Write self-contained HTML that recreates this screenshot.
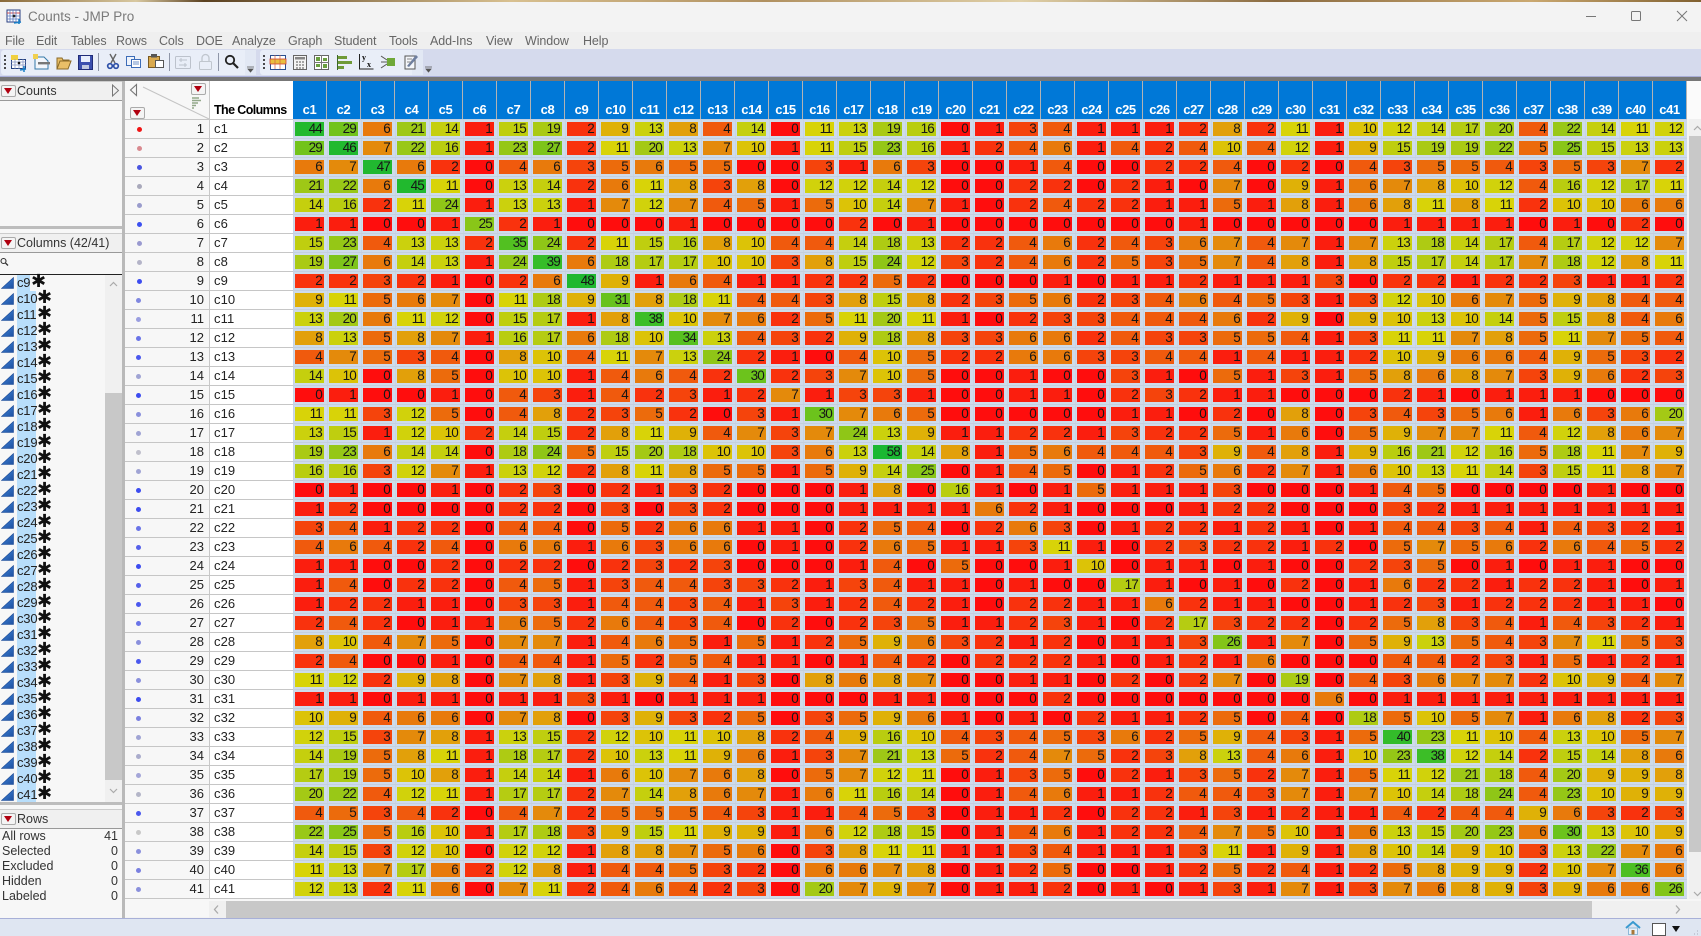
<!DOCTYPE html>
<html><head><meta charset="utf-8"><title>Counts - JMP Pro</title>
<style>
html,body{margin:0;padding:0;width:1701px;height:936px;overflow:hidden;background:#f3f3f3;font-family:"Liberation Sans",sans-serif;font-size:12.5px;color:#222}
.p{position:absolute}
#strip{left:0;top:0;width:1701px;height:2px;background:linear-gradient(90deg,#8a6a3a,#d8c8a0 8%,#5a4020 12%,#d8c090 30%,#b09060 45%,#e0d0a8 60%,#8a6a40 75%,#caa870 90%,#806030)}
#title{left:28px;top:8px;font-size:13.5px;color:#7a7a7a;line-height:17px}
#menu{left:0;top:32px;width:1701px;height:17px;background:#efefef}
#menu span{position:absolute;top:1px;line-height:17px;color:#666;font-size:12.5px;letter-spacing:-.1px}
#tb{left:0;top:49px;width:1701px;height:27px;background:#d5daed}
#tl{left:0;top:76px;width:1701px;height:1px;background:#a9aed8}
#tg{left:0;top:77px;width:1701px;height:4px;background:#777}
#lp{left:0;top:81px;width:122px;height:837px;background:#f7f7f7}
#ls{left:122px;top:81px;width:3px;height:837px;background:#b9b9b9}
.hd{position:absolute;left:0;width:122px;height:18px;background:#f0f0f0;border-top:1px solid #ccc;border-bottom:1px solid #999;line-height:18px;text-indent:17px;color:#333;font-size:12.5px}
.rb{position:absolute;width:13px;height:10px;border:1px solid #aaa;border-radius:2px;background:#f4f4f4}
.rb:after{content:"";position:absolute;left:2px;top:2px;border-left:4.5px solid transparent;border-right:4.5px solid transparent;border-top:6px solid #b00010}
.gb{position:absolute;left:0;width:122px;height:3px;background:#bdbdbd}
#ll{left:0;top:275px;width:105px}
.l{position:relative;height:16px;line-height:16px;font-size:13px;color:#222}
.l b{position:absolute;left:17px;top:0;width:19px;height:16px;background:#b8defb;font-weight:normal;letter-spacing:-.2px;white-space:nowrap}
.l em{position:absolute;left:37px;top:-2px;font:bold 18px/18px "DejaVu Sans",sans-serif;color:#111}
.l svg{position:absolute;left:1px;top:2px}
.sr{position:absolute;left:2px;width:116px;line-height:15px;height:15px;font-size:12.5px;color:#333}
.sr i{position:absolute;right:0;font-style:normal}
#rc{left:125px;top:81px;width:168px;height:836px;background:#f7f7f7}
#nc{left:210px;top:81px;width:83px;height:817px;background:#fff}
#rv{left:209px;top:81px;width:1px;height:817px;background:#c8c8c8}
#rl{left:125px;top:119px;width:168px}
.h{position:relative;height:18px;border-top:1px solid #c6c6c6;line-height:18px;font-size:13px;color:#222}
.h s{position:absolute;top:7px;left:12px;width:5px;height:5px;border-radius:50%}
.h em{position:absolute;right:89px;top:0;font-style:normal}
.h u{position:absolute;left:89px;top:0;text-decoration:none;letter-spacing:.1px}
#the{left:214px;top:102px;font:bold 12.5px/16px "Liberation Sans",sans-serif;letter-spacing:-.6px;color:#000;white-space:nowrap}
#hc{left:293px;top:81px;width:1394px;height:38px;display:flex;background:#0078d7}
#hc div{width:34px;box-sizing:border-box;border-right:1px solid #b3b3b3;text-align:center;color:#fff;font:bold 13px/16px "Liberation Sans",sans-serif;letter-spacing:-.4px;padding-top:21px}
#hm{left:293px;top:119px;width:1394px;height:780px;background-color:#cedbea;background-image:linear-gradient(#c4d0e0 1px,transparent 1px),linear-gradient(90deg,#c8d4e3 1px,transparent 1px);background-size:34px 19px}
.r{display:flex;height:19px;box-sizing:border-box;padding:3px 0 0 2px}
.r i{display:block;flex:none;width:29px;height:14px;margin-right:5px;box-sizing:border-box;padding-right:2px;text-align:right;font:13.5px/14px "Liberation Sans",sans-serif;letter-spacing:-.8px;color:#161616}
.a0{background:#ff0d0d}.a1{background:#fb1e0e}.a2{background:#f9320d}.a3{background:#f5440c}.a4{background:#f05a0d}.a5{background:#ec6b0c}.a6{background:#e87a0c}.a7{background:#e48a0b}.a8{background:#e2a00a}.a9{background:#dfb107}.a10{background:#dcc307}.a11{background:#d8d308}.a12{background:#d1d20b}.a13{background:#cbd10d}.a14{background:#c5cf0e}.a15{background:#bfce0f}.a16{background:#b9cd10}.a17{background:#b5cc12}.a18{background:#aecb13}.a19{background:#aaca14}.a20{background:#a4c915}.a21{background:#9ec816}.a22{background:#99c817}.a23{background:#95c716}.a24{background:#8fc617}.a25{background:#89c618}.a26{background:#83c519}.a27{background:#7dc41a}.a29{background:#72c31b}.a30{background:#6cc31c}.a31{background:#67c21e}.a34{background:#57c020}.a35{background:#52c021}.a36{background:#4cbf23}.a38{background:#3cbe27}.a39{background:#36bd29}.a40{background:#33bc2a}.a44{background:#23b92d}.a45{background:#21b92e}.a46{background:#21b92f}.a47{background:#21b830}.a48{background:#1fb830}.a58{background:#1ab832}
#st{left:0;top:918px;width:1701px;height:18px;background:#dfe6f2;border-top:1px solid #a8b0d8;box-sizing:border-box}
</style></head><body>
<div class="p" id="strip"></div>
<svg class="p" style="left:6px;top:9px" width="16" height="16" viewBox="0 0 16 16"><rect x="1" y="1" width="13" height="12" fill="#fff" stroke="#2a3f80"/><path d="M1 4h13" stroke="#d85050" stroke-width="1"/><path d="M1 7h13M1 10h13M4 1v12M7 1v12M10 1v12" stroke="#5a7ac0" stroke-width=".8"/><circle cx="8" cy="7" r="1.4" fill="#222"/><path d="M8 14l7-1M13 10v5" stroke="#1a80c8" stroke-width="1.6"/></svg>
<div class="p" id="title">Counts - JMP Pro</div>
<svg class="p" style="left:1580px;top:8px" width="115" height="18" viewBox="0 0 115 18"><path d="M6 8.5h10" stroke="#777" stroke-width="1"/><rect x="51.5" y="3.5" width="9" height="9" rx="1" fill="none" stroke="#777"/><path d="M97 3l10 10M107 3L97 13" stroke="#777" stroke-width="1"/></svg>
<div class="p" id="menu"><span style="left:5px">File</span><span style="left:36px">Edit</span><span style="left:71px">Tables</span><span style="left:116px">Rows</span><span style="left:159px">Cols</span><span style="left:196px">DOE</span><span style="left:232px">Analyze</span><span style="left:288px">Graph</span><span style="left:334px">Student</span><span style="left:389px">Tools</span><span style="left:430px">Add-Ins</span><span style="left:486px">View</span><span style="left:525px">Window</span><span style="left:583px">Help</span></div>
<div class="p" id="tb"></div>
<svg class="p" style="left:0;top:49px" width="440" height="28" viewBox="0 49 440 28">
<rect x="1" y="50" width="255" height="25" rx="3" fill="#e9eef8"/><rect x="260" y="50" width="163" height="25" rx="3" fill="#e9eef8"/>
<rect x="245" y="50" width="11" height="25" fill="#e2e8f4"/><rect x="412" y="50" width="11" height="25" fill="#e2e8f4"/>
<path d="M5 55v2M5 59v2M5 63v2M5 67v2M264 55v2M264 59v2M264 63v2M264 67v2" stroke="#222" stroke-width="1.6"/>
<rect x="11.5" y="59.5" width="14" height="9" fill="#fff" stroke="#23407f"/><rect x="11" y="55" width="7" height="5" fill="#f0d040"/><path d="M11 62h15M11 65h15M15 59v10M19 59v10M23 59v10" stroke="#8090c0" stroke-width=".7"/><circle cx="19" cy="63" r="1.3" fill="#111"/><path d="M20 70l6-1M24 66v6" stroke="#1a80c8" stroke-width="1.5"/>
<path d="M35 57h9l4 4v8H35z" fill="#f3f6fb" stroke="#3478a8"/><rect x="33" y="54" width="5" height="5" fill="#f0d050"/><rect x="38" y="62" width="12" height="2.4" fill="#777"/>
<path d="M57 69l3-8h11l-3 8zM57 69v-11h5l1 2h6v1" fill="#e9bf68" stroke="#8a6a28"/>
<rect x="78.5" y="55.5" width="14" height="14" fill="#3b4fae" stroke="#202c78"/><rect x="81" y="56" width="9" height="6" fill="#e8eefc"/><rect x="82" y="65" width="7" height="4" fill="#c0c8e0"/>
<path d="M98.5 53v18M169.5 53v18M218.5 53v18" stroke="#8f96a8"/>
<path d="M110 54l5 9M116 54l-5 9" stroke="#666" stroke-width="1.4"/><circle cx="110" cy="66" r="2.3" fill="none" stroke="#2d50a8" stroke-width="1.7"/><circle cx="116" cy="66" r="2.3" fill="none" stroke="#2d50a8" stroke-width="1.7"/>
<rect x="126.5" y="56.5" width="8" height="9" fill="#eef3fb" stroke="#3c6cb8"/><rect x="131.5" y="59.5" width="9" height="8" fill="#fff" stroke="#3c6cb8"/><path d="M133 62h6M133 64h6" stroke="#3c6cb8" stroke-width=".7"/>
<rect x="148.5" y="56.5" width="11" height="11" fill="#d9a94e" stroke="#7a5a20"/><rect x="151" y="54" width="6" height="3.5" fill="#555"/><rect x="155.5" y="60.5" width="8" height="7" fill="#fff" stroke="#555"/>
<rect x="175.5" y="56.5" width="15" height="12" rx="1" fill="none" stroke="#bcc2cc"/><path d="M179 60h8M179 65h8M181 58v4M185 63v4" stroke="#bcc2cc"/>
<rect x="199.5" y="61.5" width="12" height="8" rx="1" fill="none" stroke="#c0c6ce"/><path d="M202 61v-3a3.5 3.5 0 017 0v3" fill="none" stroke="#c0c6ce" stroke-width="1.3"/>
<circle cx="230" cy="60" r="4.2" fill="none" stroke="#222" stroke-width="1.8"/><path d="M233 63l5 5" stroke="#222" stroke-width="2.2"/>
<path d="M247 67h7M248 69h5l-2.5 3z" stroke="#555" stroke-width=".8" fill="#555"/><path d="M425 67h7M426 69h5l-2.5 3z" stroke="#555" stroke-width=".8" fill="#555"/>
<rect x="270.5" y="55.5" width="15" height="14" fill="#fff" stroke="#2a4f90"/><rect x="270" y="59" width="16" height="5" fill="#e8c040" stroke="#d04030" stroke-width=".8"/><path d="M275 55v14M280 55v14" stroke="#d06040" stroke-width=".7"/>
<rect x="293.5" y="55.5" width="13" height="14" fill="#f4f4f4" stroke="#666"/><rect x="295" y="57" width="10" height="2.5" fill="#888"/><path d="M296 62h2M299 62h2M302 62h2M296 65h2M299 65h2M302 65h2M296 68h2M299 68h2M302 68h2" stroke="#555"/>
<rect x="314.5" y="55.5" width="14" height="14" fill="#fff" stroke="#666"/><path d="M321.5 55v14M314 62.5h15" stroke="#777"/><rect x="316" y="57" width="4" height="4" fill="#6aa040"/><rect x="323" y="58" width="4" height="3" fill="#6aa040"/><rect x="316" y="64" width="4" height="3" fill="#6aa040"/><rect x="323" y="64" width="4" height="4" fill="#6aa040"/>
<path d="M337.5 55v15" stroke="#3c6828"/><rect x="338" y="56" width="9" height="3" fill="#6f9a38"/><rect x="338" y="61" width="14" height="3" fill="#6f9a38"/><rect x="338" y="66" width="6" height="3" fill="#6f9a38"/>
<path d="M359.5 54v15h14" fill="none" stroke="#222"/><text x="362" y="60" font-family="Liberation Serif" font-size="8" font-weight="bold" fill="#111">y</text><text x="367" y="67" font-family="Liberation Serif" font-size="8" font-weight="bold" fill="#111">x</text>
<path d="M381 56l6 4M381 62h6M381 68l6-4" stroke="#555"/><rect x="387" y="58" width="8" height="8" fill="#6fa838"/>
<path d="M405 56h10v13h-10z" fill="#f4f6fa" stroke="#555"/><path d="M407 66l9-11 2 2-9 10z" fill="#6f7f9f"/><path d="M407 59h5M407 62h4" stroke="#888"/>
</svg>
<div class="p" id="tl"></div><div class="p" id="tg"></div>

<div class="p" id="lp"></div><div class="p" id="ls"></div>
<div class="hd" style="top:81px">Counts</div><div class="rb" style="left:1px;top:85px"></div>
<svg class="p" style="left:111px;top:83px" width="9" height="15" viewBox="0 0 9 15"><path d="M1.5 2l6 5.5-6 5.5z" fill="none" stroke="#777"/></svg>
<div class="gb" style="top:226px"></div>
<div class="hd" style="top:233px">Columns (42/41)</div><div class="rb" style="left:1px;top:237px"></div>
<svg class="p" style="left:0;top:256px" width="10" height="12" viewBox="0 0 10 12"><circle cx="3.5" cy="5" r="2.5" fill="none" stroke="#333" stroke-width="1.1"/><path d="M5.5 7l2.5 2.5" stroke="#333" stroke-width="1.3"/></svg>
<div class="p" style="left:0;top:274px;width:122px;height:1px;background:#222"></div>
<div class="p" style="left:105px;top:275px;width:17px;height:527px;background:#f0f0f0"></div>
<div class="p" style="left:105px;top:393px;width:17px;height:387px;background:#c8c8c8"></div>
<svg class="p" style="left:105px;top:275px" width="17" height="527" viewBox="0 0 17 527"><path d="M5 11l3.5-3.5L12 11M5 514l3.5 3.5L12 514" fill="none" stroke="#aaa" stroke-width="1.2"/></svg>
<svg width="0" height="0" style="position:absolute"><defs><linearGradient id="g" x1="0" y1="0" x2="1" y2="1"><stop offset="0" stop-color="#3f8ae0"/><stop offset="1" stop-color="#1f4f9f"/></linearGradient><symbol id="t" viewBox="0 0 13 12"><path d="M.5 11.5L12.5.5v11z" fill="url(#g)" stroke="#1d4a96" stroke-width=".6"/></symbol></defs></svg>
<div class="p" id="ll">
<div class="l"><svg width="13" height="12"><use href="#t"/></svg><b style="width:13px">c9</b><em style="left:31px">✱</em></div>
<div class="l"><svg width="13" height="12"><use href="#t"/></svg><b>c10</b><em>✱</em></div>
<div class="l"><svg width="13" height="12"><use href="#t"/></svg><b>c11</b><em>✱</em></div>
<div class="l"><svg width="13" height="12"><use href="#t"/></svg><b>c12</b><em>✱</em></div>
<div class="l"><svg width="13" height="12"><use href="#t"/></svg><b>c13</b><em>✱</em></div>
<div class="l"><svg width="13" height="12"><use href="#t"/></svg><b>c14</b><em>✱</em></div>
<div class="l"><svg width="13" height="12"><use href="#t"/></svg><b>c15</b><em>✱</em></div>
<div class="l"><svg width="13" height="12"><use href="#t"/></svg><b>c16</b><em>✱</em></div>
<div class="l"><svg width="13" height="12"><use href="#t"/></svg><b>c17</b><em>✱</em></div>
<div class="l"><svg width="13" height="12"><use href="#t"/></svg><b>c18</b><em>✱</em></div>
<div class="l"><svg width="13" height="12"><use href="#t"/></svg><b>c19</b><em>✱</em></div>
<div class="l"><svg width="13" height="12"><use href="#t"/></svg><b>c20</b><em>✱</em></div>
<div class="l"><svg width="13" height="12"><use href="#t"/></svg><b>c21</b><em>✱</em></div>
<div class="l"><svg width="13" height="12"><use href="#t"/></svg><b>c22</b><em>✱</em></div>
<div class="l"><svg width="13" height="12"><use href="#t"/></svg><b>c23</b><em>✱</em></div>
<div class="l"><svg width="13" height="12"><use href="#t"/></svg><b>c24</b><em>✱</em></div>
<div class="l"><svg width="13" height="12"><use href="#t"/></svg><b>c25</b><em>✱</em></div>
<div class="l"><svg width="13" height="12"><use href="#t"/></svg><b>c26</b><em>✱</em></div>
<div class="l"><svg width="13" height="12"><use href="#t"/></svg><b>c27</b><em>✱</em></div>
<div class="l"><svg width="13" height="12"><use href="#t"/></svg><b>c28</b><em>✱</em></div>
<div class="l"><svg width="13" height="12"><use href="#t"/></svg><b>c29</b><em>✱</em></div>
<div class="l"><svg width="13" height="12"><use href="#t"/></svg><b>c30</b><em>✱</em></div>
<div class="l"><svg width="13" height="12"><use href="#t"/></svg><b>c31</b><em>✱</em></div>
<div class="l"><svg width="13" height="12"><use href="#t"/></svg><b>c32</b><em>✱</em></div>
<div class="l"><svg width="13" height="12"><use href="#t"/></svg><b>c33</b><em>✱</em></div>
<div class="l"><svg width="13" height="12"><use href="#t"/></svg><b>c34</b><em>✱</em></div>
<div class="l"><svg width="13" height="12"><use href="#t"/></svg><b>c35</b><em>✱</em></div>
<div class="l"><svg width="13" height="12"><use href="#t"/></svg><b>c36</b><em>✱</em></div>
<div class="l"><svg width="13" height="12"><use href="#t"/></svg><b>c37</b><em>✱</em></div>
<div class="l"><svg width="13" height="12"><use href="#t"/></svg><b>c38</b><em>✱</em></div>
<div class="l"><svg width="13" height="12"><use href="#t"/></svg><b>c39</b><em>✱</em></div>
<div class="l"><svg width="13" height="12"><use href="#t"/></svg><b>c40</b><em>✱</em></div>
<div class="l"><svg width="13" height="12"><use href="#t"/></svg><b>c41</b><em>✱</em></div>
</div>
<div class="gb" style="top:802px"></div>
<div class="hd" style="top:809px">Rows</div><div class="rb" style="left:1px;top:813px"></div>
<div class="sr" style="top:829px">All rows<i>41</i></div>
<div class="sr" style="top:844px">Selected<i>0</i></div>
<div class="sr" style="top:859px">Excluded<i>0</i></div>
<div class="sr" style="top:874px">Hidden<i>0</i></div>
<div class="sr" style="top:889px">Labeled<i>0</i></div>

<div class="p" id="rc"></div><div class="p" id="nc"></div><div class="p" id="rv"></div>
<svg class="p" style="left:125px;top:81px" width="85" height="38" viewBox="125 81 85 38"><path d="M143 87l66 32" stroke="#c4c4c4"/><path d="M136.5 84.5l-6 5.5 6 5.5z" fill="none" stroke="#777" stroke-width="1.1"/><path d="M192 98h7M192 100.500h9M192 103h6M192 105.500h4M192 108h2" stroke="#93a88a" stroke-width="1.6"/></svg>
<div class="rb" style="left:191px;top:83px"></div><div class="rb" style="left:130px;top:107px"></div>
<div class="p" id="the">The Columns</div>
<div class="p" id="hc"><div>c1</div><div>c2</div><div>c3</div><div>c4</div><div>c5</div><div>c6</div><div>c7</div><div>c8</div><div>c9</div><div>c10</div><div>c11</div><div>c12</div><div>c13</div><div>c14</div><div>c15</div><div>c16</div><div>c17</div><div>c18</div><div>c19</div><div>c20</div><div>c21</div><div>c22</div><div>c23</div><div>c24</div><div>c25</div><div>c26</div><div>c27</div><div>c28</div><div>c29</div><div>c30</div><div>c31</div><div>c32</div><div>c33</div><div>c34</div><div>c35</div><div>c36</div><div>c37</div><div>c38</div><div>c39</div><div>c40</div><div>c41</div></div>
<div class="p" id="rl">
<div class="h"><s style="background:#f01414;left:12px"></s><em>1</em><u>c1</u></div>
<div class="h"><s style="background:#d98a90"></s><em>2</em><u>c2</u></div>
<div class="h"><s style="background:#4a55e0"></s><em>3</em><u>c3</u></div>
<div class="h"><s style="background:#a9a9bb"></s><em>4</em><u>c4</u></div>
<div class="h"><s style="background:#9a9ccc"></s><em>5</em><u>c5</u></div>
<div class="h"><s style="background:#3c50f0"></s><em>6</em><u>c6</u></div>
<div class="h"><s style="background:#9a9ad0"></s><em>7</em><u>c7</u></div>
<div class="h"><s style="background:#b4b4c8"></s><em>8</em><u>c8</u></div>
<div class="h"><s style="background:#3c4cf0"></s><em>9</em><u>c9</u></div>
<div class="h"><s style="background:#8088e0;left:11px"></s><em>10</em><u>c10</u></div>
<div class="h"><s style="background:#9a9ee0;left:11px"></s><em>11</em><u>c11</u></div>
<div class="h"><s style="background:#6a74e8;left:11px"></s><em>12</em><u>c12</u></div>
<div class="h"><s style="background:#4a58ee;left:11px"></s><em>13</em><u>c13</u></div>
<div class="h"><s style="background:#a0a4d4;left:11px"></s><em>14</em><u>c14</u></div>
<div class="h"><s style="background:#3c4cf0;left:11px"></s><em>15</em><u>c15</u></div>
<div class="h"><s style="background:#8a90dc;left:11px"></s><em>16</em><u>c16</u></div>
<div class="h"><s style="background:#a0a4d4;left:11px"></s><em>17</em><u>c17</u></div>
<div class="h"><s style="background:#c0c0cc;left:11px"></s><em>18</em><u>c18</u></div>
<div class="h"><s style="background:#a0a4d4;left:11px"></s><em>19</em><u>c19</u></div>
<div class="h"><s style="background:#3c4cf0;left:11px"></s><em>20</em><u>c20</u></div>
<div class="h"><s style="background:#3c4cf0;left:11px"></s><em>21</em><u>c21</u></div>
<div class="h"><s style="background:#6a74e8;left:11px"></s><em>22</em><u>c22</u></div>
<div class="h"><s style="background:#5560ea;left:11px"></s><em>23</em><u>c23</u></div>
<div class="h"><s style="background:#3c4cf0;left:11px"></s><em>24</em><u>c24</u></div>
<div class="h"><s style="background:#5560ea;left:11px"></s><em>25</em><u>c25</u></div>
<div class="h"><s style="background:#4a58ee;left:11px"></s><em>26</em><u>c26</u></div>
<div class="h"><s style="background:#6a74e8;left:11px"></s><em>27</em><u>c27</u></div>
<div class="h"><s style="background:#8a90dc;left:11px"></s><em>28</em><u>c28</u></div>
<div class="h"><s style="background:#4a58ee;left:11px"></s><em>29</em><u>c29</u></div>
<div class="h"><s style="background:#8a90dc;left:11px"></s><em>30</em><u>c30</u></div>
<div class="h"><s style="background:#3c4cf0;left:11px"></s><em>31</em><u>c31</u></div>
<div class="h"><s style="background:#7a80e0;left:11px"></s><em>32</em><u>c32</u></div>
<div class="h"><s style="background:#a0a4d4;left:11px"></s><em>33</em><u>c33</u></div>
<div class="h"><s style="background:#aaaccc;left:11px"></s><em>34</em><u>c34</u></div>
<div class="h"><s style="background:#a4a6d8;left:11px"></s><em>35</em><u>c35</u></div>
<div class="h"><s style="background:#b4b6c8;left:11px"></s><em>36</em><u>c36</u></div>
<div class="h"><s style="background:#4a58ee;left:11px"></s><em>37</em><u>c37</u></div>
<div class="h"><s style="background:#c8c8c8;left:11px"></s><em>38</em><u>c38</u></div>
<div class="h"><s style="background:#8a90dc;left:11px"></s><em>39</em><u>c39</u></div>
<div class="h"><s style="background:#7a80e0;left:11px"></s><em>40</em><u>c40</u></div>
<div class="h"><s style="background:#8a90dc;left:11px"></s><em>41</em><u>c41</u></div>
<div style="height:0;border-top:1px solid #c6c6c6"></div>
</div>
<div class="p" id="hm">
<div class="r"><i class=a44>44</i><i class=a29>29</i><i class=a6>6</i><i class=a21>21</i><i class=a14>14</i><i class=a1>1</i><i class=a15>15</i><i class=a19>19</i><i class=a2>2</i><i class=a9>9</i><i class=a13>13</i><i class=a8>8</i><i class=a4>4</i><i class=a14>14</i><i class=a0>0</i><i class=a11>11</i><i class=a13>13</i><i class=a19>19</i><i class=a16>16</i><i class=a0>0</i><i class=a1>1</i><i class=a3>3</i><i class=a4>4</i><i class=a1>1</i><i class=a1>1</i><i class=a1>1</i><i class=a2>2</i><i class=a8>8</i><i class=a2>2</i><i class=a11>11</i><i class=a1>1</i><i class=a10>10</i><i class=a12>12</i><i class=a14>14</i><i class=a17>17</i><i class=a20>20</i><i class=a4>4</i><i class=a22>22</i><i class=a14>14</i><i class=a11>11</i><i class=a12>12</i></div>
<div class="r"><i class=a29>29</i><i class=a46>46</i><i class=a7>7</i><i class=a22>22</i><i class=a16>16</i><i class=a1>1</i><i class=a23>23</i><i class=a27>27</i><i class=a2>2</i><i class=a11>11</i><i class=a20>20</i><i class=a13>13</i><i class=a7>7</i><i class=a10>10</i><i class=a1>1</i><i class=a11>11</i><i class=a15>15</i><i class=a23>23</i><i class=a16>16</i><i class=a1>1</i><i class=a2>2</i><i class=a4>4</i><i class=a6>6</i><i class=a1>1</i><i class=a4>4</i><i class=a2>2</i><i class=a4>4</i><i class=a10>10</i><i class=a4>4</i><i class=a12>12</i><i class=a1>1</i><i class=a9>9</i><i class=a15>15</i><i class=a19>19</i><i class=a19>19</i><i class=a22>22</i><i class=a5>5</i><i class=a25>25</i><i class=a15>15</i><i class=a13>13</i><i class=a13>13</i></div>
<div class="r"><i class=a6>6</i><i class=a7>7</i><i class=a47>47</i><i class=a6>6</i><i class=a2>2</i><i class=a0>0</i><i class=a4>4</i><i class=a6>6</i><i class=a3>3</i><i class=a5>5</i><i class=a6>6</i><i class=a5>5</i><i class=a5>5</i><i class=a0>0</i><i class=a0>0</i><i class=a3>3</i><i class=a1>1</i><i class=a6>6</i><i class=a3>3</i><i class=a0>0</i><i class=a0>0</i><i class=a1>1</i><i class=a4>4</i><i class=a0>0</i><i class=a0>0</i><i class=a2>2</i><i class=a2>2</i><i class=a4>4</i><i class=a0>0</i><i class=a2>2</i><i class=a0>0</i><i class=a4>4</i><i class=a3>3</i><i class=a5>5</i><i class=a5>5</i><i class=a4>4</i><i class=a3>3</i><i class=a5>5</i><i class=a3>3</i><i class=a7>7</i><i class=a2>2</i></div>
<div class="r"><i class=a21>21</i><i class=a22>22</i><i class=a6>6</i><i class=a45>45</i><i class=a11>11</i><i class=a0>0</i><i class=a13>13</i><i class=a14>14</i><i class=a2>2</i><i class=a6>6</i><i class=a11>11</i><i class=a8>8</i><i class=a3>3</i><i class=a8>8</i><i class=a0>0</i><i class=a12>12</i><i class=a12>12</i><i class=a14>14</i><i class=a12>12</i><i class=a0>0</i><i class=a0>0</i><i class=a2>2</i><i class=a2>2</i><i class=a0>0</i><i class=a2>2</i><i class=a1>1</i><i class=a0>0</i><i class=a7>7</i><i class=a0>0</i><i class=a9>9</i><i class=a1>1</i><i class=a6>6</i><i class=a7>7</i><i class=a8>8</i><i class=a10>10</i><i class=a12>12</i><i class=a4>4</i><i class=a16>16</i><i class=a12>12</i><i class=a17>17</i><i class=a11>11</i></div>
<div class="r"><i class=a14>14</i><i class=a16>16</i><i class=a2>2</i><i class=a11>11</i><i class=a24>24</i><i class=a1>1</i><i class=a13>13</i><i class=a13>13</i><i class=a1>1</i><i class=a7>7</i><i class=a12>12</i><i class=a7>7</i><i class=a4>4</i><i class=a5>5</i><i class=a1>1</i><i class=a5>5</i><i class=a10>10</i><i class=a14>14</i><i class=a7>7</i><i class=a1>1</i><i class=a0>0</i><i class=a2>2</i><i class=a4>4</i><i class=a2>2</i><i class=a2>2</i><i class=a1>1</i><i class=a1>1</i><i class=a5>5</i><i class=a1>1</i><i class=a8>8</i><i class=a1>1</i><i class=a6>6</i><i class=a8>8</i><i class=a11>11</i><i class=a8>8</i><i class=a11>11</i><i class=a2>2</i><i class=a10>10</i><i class=a10>10</i><i class=a6>6</i><i class=a6>6</i></div>
<div class="r"><i class=a1>1</i><i class=a1>1</i><i class=a0>0</i><i class=a0>0</i><i class=a1>1</i><i class=a25>25</i><i class=a2>2</i><i class=a1>1</i><i class=a0>0</i><i class=a0>0</i><i class=a0>0</i><i class=a1>1</i><i class=a0>0</i><i class=a0>0</i><i class=a0>0</i><i class=a0>0</i><i class=a2>2</i><i class=a0>0</i><i class=a1>1</i><i class=a0>0</i><i class=a0>0</i><i class=a0>0</i><i class=a0>0</i><i class=a0>0</i><i class=a0>0</i><i class=a0>0</i><i class=a1>1</i><i class=a0>0</i><i class=a0>0</i><i class=a0>0</i><i class=a0>0</i><i class=a0>0</i><i class=a1>1</i><i class=a1>1</i><i class=a1>1</i><i class=a1>1</i><i class=a0>0</i><i class=a1>1</i><i class=a0>0</i><i class=a2>2</i><i class=a0>0</i></div>
<div class="r"><i class=a15>15</i><i class=a23>23</i><i class=a4>4</i><i class=a13>13</i><i class=a13>13</i><i class=a2>2</i><i class=a35>35</i><i class=a24>24</i><i class=a2>2</i><i class=a11>11</i><i class=a15>15</i><i class=a16>16</i><i class=a8>8</i><i class=a10>10</i><i class=a4>4</i><i class=a4>4</i><i class=a14>14</i><i class=a18>18</i><i class=a13>13</i><i class=a2>2</i><i class=a2>2</i><i class=a4>4</i><i class=a6>6</i><i class=a2>2</i><i class=a4>4</i><i class=a3>3</i><i class=a6>6</i><i class=a7>7</i><i class=a4>4</i><i class=a7>7</i><i class=a1>1</i><i class=a7>7</i><i class=a13>13</i><i class=a18>18</i><i class=a14>14</i><i class=a17>17</i><i class=a4>4</i><i class=a17>17</i><i class=a12>12</i><i class=a12>12</i><i class=a7>7</i></div>
<div class="r"><i class=a19>19</i><i class=a27>27</i><i class=a6>6</i><i class=a14>14</i><i class=a13>13</i><i class=a1>1</i><i class=a24>24</i><i class=a39>39</i><i class=a6>6</i><i class=a18>18</i><i class=a17>17</i><i class=a17>17</i><i class=a10>10</i><i class=a10>10</i><i class=a3>3</i><i class=a8>8</i><i class=a15>15</i><i class=a24>24</i><i class=a12>12</i><i class=a3>3</i><i class=a2>2</i><i class=a4>4</i><i class=a6>6</i><i class=a2>2</i><i class=a5>5</i><i class=a3>3</i><i class=a5>5</i><i class=a7>7</i><i class=a4>4</i><i class=a8>8</i><i class=a1>1</i><i class=a8>8</i><i class=a15>15</i><i class=a17>17</i><i class=a14>14</i><i class=a17>17</i><i class=a7>7</i><i class=a18>18</i><i class=a12>12</i><i class=a8>8</i><i class=a11>11</i></div>
<div class="r"><i class=a2>2</i><i class=a2>2</i><i class=a3>3</i><i class=a2>2</i><i class=a1>1</i><i class=a0>0</i><i class=a2>2</i><i class=a6>6</i><i class=a48>48</i><i class=a9>9</i><i class=a1>1</i><i class=a6>6</i><i class=a4>4</i><i class=a1>1</i><i class=a1>1</i><i class=a2>2</i><i class=a2>2</i><i class=a5>5</i><i class=a2>2</i><i class=a0>0</i><i class=a0>0</i><i class=a0>0</i><i class=a1>1</i><i class=a0>0</i><i class=a1>1</i><i class=a1>1</i><i class=a2>2</i><i class=a1>1</i><i class=a1>1</i><i class=a1>1</i><i class=a3>3</i><i class=a0>0</i><i class=a2>2</i><i class=a2>2</i><i class=a1>1</i><i class=a2>2</i><i class=a2>2</i><i class=a3>3</i><i class=a1>1</i><i class=a1>1</i><i class=a2>2</i></div>
<div class="r"><i class=a9>9</i><i class=a11>11</i><i class=a5>5</i><i class=a6>6</i><i class=a7>7</i><i class=a0>0</i><i class=a11>11</i><i class=a18>18</i><i class=a9>9</i><i class=a31>31</i><i class=a8>8</i><i class=a18>18</i><i class=a11>11</i><i class=a4>4</i><i class=a4>4</i><i class=a3>3</i><i class=a8>8</i><i class=a15>15</i><i class=a8>8</i><i class=a2>2</i><i class=a3>3</i><i class=a5>5</i><i class=a6>6</i><i class=a2>2</i><i class=a3>3</i><i class=a4>4</i><i class=a6>6</i><i class=a4>4</i><i class=a5>5</i><i class=a3>3</i><i class=a1>1</i><i class=a3>3</i><i class=a12>12</i><i class=a10>10</i><i class=a6>6</i><i class=a7>7</i><i class=a5>5</i><i class=a9>9</i><i class=a8>8</i><i class=a4>4</i><i class=a4>4</i></div>
<div class="r"><i class=a13>13</i><i class=a20>20</i><i class=a6>6</i><i class=a11>11</i><i class=a12>12</i><i class=a0>0</i><i class=a15>15</i><i class=a17>17</i><i class=a1>1</i><i class=a8>8</i><i class=a38>38</i><i class=a10>10</i><i class=a7>7</i><i class=a6>6</i><i class=a2>2</i><i class=a5>5</i><i class=a11>11</i><i class=a20>20</i><i class=a11>11</i><i class=a1>1</i><i class=a0>0</i><i class=a2>2</i><i class=a3>3</i><i class=a3>3</i><i class=a4>4</i><i class=a4>4</i><i class=a4>4</i><i class=a6>6</i><i class=a2>2</i><i class=a9>9</i><i class=a0>0</i><i class=a9>9</i><i class=a10>10</i><i class=a13>13</i><i class=a10>10</i><i class=a14>14</i><i class=a5>5</i><i class=a15>15</i><i class=a8>8</i><i class=a4>4</i><i class=a6>6</i></div>
<div class="r"><i class=a8>8</i><i class=a13>13</i><i class=a5>5</i><i class=a8>8</i><i class=a7>7</i><i class=a1>1</i><i class=a16>16</i><i class=a17>17</i><i class=a6>6</i><i class=a18>18</i><i class=a10>10</i><i class=a34>34</i><i class=a13>13</i><i class=a4>4</i><i class=a3>3</i><i class=a2>2</i><i class=a9>9</i><i class=a18>18</i><i class=a8>8</i><i class=a3>3</i><i class=a3>3</i><i class=a6>6</i><i class=a6>6</i><i class=a2>2</i><i class=a4>4</i><i class=a3>3</i><i class=a3>3</i><i class=a5>5</i><i class=a5>5</i><i class=a4>4</i><i class=a1>1</i><i class=a3>3</i><i class=a11>11</i><i class=a11>11</i><i class=a7>7</i><i class=a8>8</i><i class=a5>5</i><i class=a11>11</i><i class=a7>7</i><i class=a5>5</i><i class=a4>4</i></div>
<div class="r"><i class=a4>4</i><i class=a7>7</i><i class=a5>5</i><i class=a3>3</i><i class=a4>4</i><i class=a0>0</i><i class=a8>8</i><i class=a10>10</i><i class=a4>4</i><i class=a11>11</i><i class=a7>7</i><i class=a13>13</i><i class=a24>24</i><i class=a2>2</i><i class=a1>1</i><i class=a0>0</i><i class=a4>4</i><i class=a10>10</i><i class=a5>5</i><i class=a2>2</i><i class=a2>2</i><i class=a6>6</i><i class=a6>6</i><i class=a3>3</i><i class=a3>3</i><i class=a4>4</i><i class=a4>4</i><i class=a1>1</i><i class=a4>4</i><i class=a1>1</i><i class=a1>1</i><i class=a2>2</i><i class=a10>10</i><i class=a9>9</i><i class=a6>6</i><i class=a6>6</i><i class=a4>4</i><i class=a9>9</i><i class=a5>5</i><i class=a3>3</i><i class=a2>2</i></div>
<div class="r"><i class=a14>14</i><i class=a10>10</i><i class=a0>0</i><i class=a8>8</i><i class=a5>5</i><i class=a0>0</i><i class=a10>10</i><i class=a10>10</i><i class=a1>1</i><i class=a4>4</i><i class=a6>6</i><i class=a4>4</i><i class=a2>2</i><i class=a30>30</i><i class=a2>2</i><i class=a3>3</i><i class=a7>7</i><i class=a10>10</i><i class=a5>5</i><i class=a0>0</i><i class=a0>0</i><i class=a1>1</i><i class=a0>0</i><i class=a0>0</i><i class=a3>3</i><i class=a1>1</i><i class=a0>0</i><i class=a5>5</i><i class=a1>1</i><i class=a3>3</i><i class=a1>1</i><i class=a5>5</i><i class=a8>8</i><i class=a6>6</i><i class=a8>8</i><i class=a7>7</i><i class=a3>3</i><i class=a9>9</i><i class=a6>6</i><i class=a2>2</i><i class=a3>3</i></div>
<div class="r"><i class=a0>0</i><i class=a1>1</i><i class=a0>0</i><i class=a0>0</i><i class=a1>1</i><i class=a0>0</i><i class=a4>4</i><i class=a3>3</i><i class=a1>1</i><i class=a4>4</i><i class=a2>2</i><i class=a3>3</i><i class=a1>1</i><i class=a2>2</i><i class=a7>7</i><i class=a1>1</i><i class=a3>3</i><i class=a3>3</i><i class=a1>1</i><i class=a0>0</i><i class=a0>0</i><i class=a1>1</i><i class=a1>1</i><i class=a0>0</i><i class=a2>2</i><i class=a3>3</i><i class=a2>2</i><i class=a1>1</i><i class=a1>1</i><i class=a0>0</i><i class=a0>0</i><i class=a0>0</i><i class=a2>2</i><i class=a1>1</i><i class=a0>0</i><i class=a1>1</i><i class=a1>1</i><i class=a1>1</i><i class=a0>0</i><i class=a0>0</i><i class=a0>0</i></div>
<div class="r"><i class=a11>11</i><i class=a11>11</i><i class=a3>3</i><i class=a12>12</i><i class=a5>5</i><i class=a0>0</i><i class=a4>4</i><i class=a8>8</i><i class=a2>2</i><i class=a3>3</i><i class=a5>5</i><i class=a2>2</i><i class=a0>0</i><i class=a3>3</i><i class=a1>1</i><i class=a30>30</i><i class=a7>7</i><i class=a6>6</i><i class=a5>5</i><i class=a0>0</i><i class=a0>0</i><i class=a0>0</i><i class=a0>0</i><i class=a0>0</i><i class=a1>1</i><i class=a1>1</i><i class=a0>0</i><i class=a2>2</i><i class=a0>0</i><i class=a8>8</i><i class=a0>0</i><i class=a3>3</i><i class=a4>4</i><i class=a3>3</i><i class=a5>5</i><i class=a6>6</i><i class=a1>1</i><i class=a6>6</i><i class=a3>3</i><i class=a6>6</i><i class=a20>20</i></div>
<div class="r"><i class=a13>13</i><i class=a15>15</i><i class=a1>1</i><i class=a12>12</i><i class=a10>10</i><i class=a2>2</i><i class=a14>14</i><i class=a15>15</i><i class=a2>2</i><i class=a8>8</i><i class=a11>11</i><i class=a9>9</i><i class=a4>4</i><i class=a7>7</i><i class=a3>3</i><i class=a7>7</i><i class=a24>24</i><i class=a13>13</i><i class=a9>9</i><i class=a1>1</i><i class=a1>1</i><i class=a2>2</i><i class=a2>2</i><i class=a1>1</i><i class=a3>3</i><i class=a2>2</i><i class=a2>2</i><i class=a5>5</i><i class=a1>1</i><i class=a6>6</i><i class=a0>0</i><i class=a5>5</i><i class=a9>9</i><i class=a7>7</i><i class=a7>7</i><i class=a11>11</i><i class=a4>4</i><i class=a12>12</i><i class=a8>8</i><i class=a6>6</i><i class=a7>7</i></div>
<div class="r"><i class=a19>19</i><i class=a23>23</i><i class=a6>6</i><i class=a14>14</i><i class=a14>14</i><i class=a0>0</i><i class=a18>18</i><i class=a24>24</i><i class=a5>5</i><i class=a15>15</i><i class=a20>20</i><i class=a18>18</i><i class=a10>10</i><i class=a10>10</i><i class=a3>3</i><i class=a6>6</i><i class=a13>13</i><i class=a58>58</i><i class=a14>14</i><i class=a8>8</i><i class=a1>1</i><i class=a5>5</i><i class=a6>6</i><i class=a4>4</i><i class=a4>4</i><i class=a4>4</i><i class=a3>3</i><i class=a9>9</i><i class=a4>4</i><i class=a8>8</i><i class=a1>1</i><i class=a9>9</i><i class=a16>16</i><i class=a21>21</i><i class=a12>12</i><i class=a16>16</i><i class=a5>5</i><i class=a18>18</i><i class=a11>11</i><i class=a7>7</i><i class=a9>9</i></div>
<div class="r"><i class=a16>16</i><i class=a16>16</i><i class=a3>3</i><i class=a12>12</i><i class=a7>7</i><i class=a1>1</i><i class=a13>13</i><i class=a12>12</i><i class=a2>2</i><i class=a8>8</i><i class=a11>11</i><i class=a8>8</i><i class=a5>5</i><i class=a5>5</i><i class=a1>1</i><i class=a5>5</i><i class=a9>9</i><i class=a14>14</i><i class=a25>25</i><i class=a0>0</i><i class=a1>1</i><i class=a4>4</i><i class=a5>5</i><i class=a0>0</i><i class=a1>1</i><i class=a2>2</i><i class=a5>5</i><i class=a6>6</i><i class=a2>2</i><i class=a7>7</i><i class=a1>1</i><i class=a6>6</i><i class=a10>10</i><i class=a13>13</i><i class=a11>11</i><i class=a14>14</i><i class=a3>3</i><i class=a15>15</i><i class=a11>11</i><i class=a8>8</i><i class=a7>7</i></div>
<div class="r"><i class=a0>0</i><i class=a1>1</i><i class=a0>0</i><i class=a0>0</i><i class=a1>1</i><i class=a0>0</i><i class=a2>2</i><i class=a3>3</i><i class=a0>0</i><i class=a2>2</i><i class=a1>1</i><i class=a3>3</i><i class=a2>2</i><i class=a0>0</i><i class=a0>0</i><i class=a0>0</i><i class=a1>1</i><i class=a8>8</i><i class=a0>0</i><i class=a16>16</i><i class=a1>1</i><i class=a0>0</i><i class=a1>1</i><i class=a5>5</i><i class=a1>1</i><i class=a1>1</i><i class=a1>1</i><i class=a3>3</i><i class=a0>0</i><i class=a0>0</i><i class=a0>0</i><i class=a1>1</i><i class=a4>4</i><i class=a5>5</i><i class=a0>0</i><i class=a0>0</i><i class=a0>0</i><i class=a0>0</i><i class=a1>1</i><i class=a0>0</i><i class=a0>0</i></div>
<div class="r"><i class=a1>1</i><i class=a2>2</i><i class=a0>0</i><i class=a0>0</i><i class=a0>0</i><i class=a0>0</i><i class=a2>2</i><i class=a2>2</i><i class=a0>0</i><i class=a3>3</i><i class=a0>0</i><i class=a3>3</i><i class=a2>2</i><i class=a0>0</i><i class=a0>0</i><i class=a0>0</i><i class=a1>1</i><i class=a1>1</i><i class=a1>1</i><i class=a1>1</i><i class=a6>6</i><i class=a2>2</i><i class=a1>1</i><i class=a0>0</i><i class=a0>0</i><i class=a0>0</i><i class=a1>1</i><i class=a2>2</i><i class=a2>2</i><i class=a0>0</i><i class=a0>0</i><i class=a0>0</i><i class=a3>3</i><i class=a2>2</i><i class=a1>1</i><i class=a1>1</i><i class=a1>1</i><i class=a1>1</i><i class=a1>1</i><i class=a1>1</i><i class=a1>1</i></div>
<div class="r"><i class=a3>3</i><i class=a4>4</i><i class=a1>1</i><i class=a2>2</i><i class=a2>2</i><i class=a0>0</i><i class=a4>4</i><i class=a4>4</i><i class=a0>0</i><i class=a5>5</i><i class=a2>2</i><i class=a6>6</i><i class=a6>6</i><i class=a1>1</i><i class=a1>1</i><i class=a0>0</i><i class=a2>2</i><i class=a5>5</i><i class=a4>4</i><i class=a0>0</i><i class=a2>2</i><i class=a6>6</i><i class=a3>3</i><i class=a0>0</i><i class=a1>1</i><i class=a2>2</i><i class=a2>2</i><i class=a1>1</i><i class=a2>2</i><i class=a1>1</i><i class=a0>0</i><i class=a1>1</i><i class=a4>4</i><i class=a4>4</i><i class=a3>3</i><i class=a4>4</i><i class=a1>1</i><i class=a4>4</i><i class=a3>3</i><i class=a2>2</i><i class=a1>1</i></div>
<div class="r"><i class=a4>4</i><i class=a6>6</i><i class=a4>4</i><i class=a2>2</i><i class=a4>4</i><i class=a0>0</i><i class=a6>6</i><i class=a6>6</i><i class=a1>1</i><i class=a6>6</i><i class=a3>3</i><i class=a6>6</i><i class=a6>6</i><i class=a0>0</i><i class=a1>1</i><i class=a0>0</i><i class=a2>2</i><i class=a6>6</i><i class=a5>5</i><i class=a1>1</i><i class=a1>1</i><i class=a3>3</i><i class=a11>11</i><i class=a1>1</i><i class=a0>0</i><i class=a2>2</i><i class=a3>3</i><i class=a2>2</i><i class=a2>2</i><i class=a1>1</i><i class=a2>2</i><i class=a0>0</i><i class=a5>5</i><i class=a7>7</i><i class=a5>5</i><i class=a6>6</i><i class=a2>2</i><i class=a6>6</i><i class=a4>4</i><i class=a5>5</i><i class=a2>2</i></div>
<div class="r"><i class=a1>1</i><i class=a1>1</i><i class=a0>0</i><i class=a0>0</i><i class=a2>2</i><i class=a0>0</i><i class=a2>2</i><i class=a2>2</i><i class=a0>0</i><i class=a2>2</i><i class=a3>3</i><i class=a2>2</i><i class=a3>3</i><i class=a0>0</i><i class=a0>0</i><i class=a0>0</i><i class=a1>1</i><i class=a4>4</i><i class=a0>0</i><i class=a5>5</i><i class=a0>0</i><i class=a0>0</i><i class=a1>1</i><i class=a10>10</i><i class=a0>0</i><i class=a1>1</i><i class=a1>1</i><i class=a0>0</i><i class=a1>1</i><i class=a0>0</i><i class=a0>0</i><i class=a2>2</i><i class=a3>3</i><i class=a5>5</i><i class=a0>0</i><i class=a1>1</i><i class=a0>0</i><i class=a1>1</i><i class=a1>1</i><i class=a0>0</i><i class=a0>0</i></div>
<div class="r"><i class=a1>1</i><i class=a4>4</i><i class=a0>0</i><i class=a2>2</i><i class=a2>2</i><i class=a0>0</i><i class=a4>4</i><i class=a5>5</i><i class=a1>1</i><i class=a3>3</i><i class=a4>4</i><i class=a4>4</i><i class=a3>3</i><i class=a3>3</i><i class=a2>2</i><i class=a1>1</i><i class=a3>3</i><i class=a4>4</i><i class=a1>1</i><i class=a1>1</i><i class=a0>0</i><i class=a1>1</i><i class=a0>0</i><i class=a0>0</i><i class=a17>17</i><i class=a1>1</i><i class=a0>0</i><i class=a1>1</i><i class=a0>0</i><i class=a2>2</i><i class=a0>0</i><i class=a1>1</i><i class=a6>6</i><i class=a2>2</i><i class=a2>2</i><i class=a1>1</i><i class=a2>2</i><i class=a2>2</i><i class=a1>1</i><i class=a0>0</i><i class=a1>1</i></div>
<div class="r"><i class=a1>1</i><i class=a2>2</i><i class=a2>2</i><i class=a1>1</i><i class=a1>1</i><i class=a0>0</i><i class=a3>3</i><i class=a3>3</i><i class=a1>1</i><i class=a4>4</i><i class=a4>4</i><i class=a3>3</i><i class=a4>4</i><i class=a1>1</i><i class=a3>3</i><i class=a1>1</i><i class=a2>2</i><i class=a4>4</i><i class=a2>2</i><i class=a1>1</i><i class=a0>0</i><i class=a2>2</i><i class=a2>2</i><i class=a1>1</i><i class=a1>1</i><i class=a6>6</i><i class=a2>2</i><i class=a1>1</i><i class=a1>1</i><i class=a0>0</i><i class=a0>0</i><i class=a1>1</i><i class=a2>2</i><i class=a3>3</i><i class=a1>1</i><i class=a2>2</i><i class=a2>2</i><i class=a2>2</i><i class=a1>1</i><i class=a1>1</i><i class=a0>0</i></div>
<div class="r"><i class=a2>2</i><i class=a4>4</i><i class=a2>2</i><i class=a0>0</i><i class=a1>1</i><i class=a1>1</i><i class=a6>6</i><i class=a5>5</i><i class=a2>2</i><i class=a6>6</i><i class=a4>4</i><i class=a3>3</i><i class=a4>4</i><i class=a0>0</i><i class=a2>2</i><i class=a0>0</i><i class=a2>2</i><i class=a3>3</i><i class=a5>5</i><i class=a1>1</i><i class=a1>1</i><i class=a2>2</i><i class=a3>3</i><i class=a1>1</i><i class=a0>0</i><i class=a2>2</i><i class=a17>17</i><i class=a3>3</i><i class=a2>2</i><i class=a2>2</i><i class=a0>0</i><i class=a2>2</i><i class=a5>5</i><i class=a8>8</i><i class=a3>3</i><i class=a4>4</i><i class=a1>1</i><i class=a4>4</i><i class=a3>3</i><i class=a2>2</i><i class=a1>1</i></div>
<div class="r"><i class=a8>8</i><i class=a10>10</i><i class=a4>4</i><i class=a7>7</i><i class=a5>5</i><i class=a0>0</i><i class=a7>7</i><i class=a7>7</i><i class=a1>1</i><i class=a4>4</i><i class=a6>6</i><i class=a5>5</i><i class=a1>1</i><i class=a5>5</i><i class=a1>1</i><i class=a2>2</i><i class=a5>5</i><i class=a9>9</i><i class=a6>6</i><i class=a3>3</i><i class=a2>2</i><i class=a1>1</i><i class=a2>2</i><i class=a0>0</i><i class=a1>1</i><i class=a1>1</i><i class=a3>3</i><i class=a26>26</i><i class=a1>1</i><i class=a7>7</i><i class=a0>0</i><i class=a5>5</i><i class=a9>9</i><i class=a13>13</i><i class=a5>5</i><i class=a4>4</i><i class=a3>3</i><i class=a7>7</i><i class=a11>11</i><i class=a5>5</i><i class=a3>3</i></div>
<div class="r"><i class=a2>2</i><i class=a4>4</i><i class=a0>0</i><i class=a0>0</i><i class=a1>1</i><i class=a0>0</i><i class=a4>4</i><i class=a4>4</i><i class=a1>1</i><i class=a5>5</i><i class=a2>2</i><i class=a5>5</i><i class=a4>4</i><i class=a1>1</i><i class=a1>1</i><i class=a0>0</i><i class=a1>1</i><i class=a4>4</i><i class=a2>2</i><i class=a0>0</i><i class=a2>2</i><i class=a2>2</i><i class=a2>2</i><i class=a1>1</i><i class=a0>0</i><i class=a1>1</i><i class=a2>2</i><i class=a1>1</i><i class=a6>6</i><i class=a0>0</i><i class=a0>0</i><i class=a0>0</i><i class=a4>4</i><i class=a4>4</i><i class=a2>2</i><i class=a3>3</i><i class=a1>1</i><i class=a5>5</i><i class=a1>1</i><i class=a2>2</i><i class=a1>1</i></div>
<div class="r"><i class=a11>11</i><i class=a12>12</i><i class=a2>2</i><i class=a9>9</i><i class=a8>8</i><i class=a0>0</i><i class=a7>7</i><i class=a8>8</i><i class=a1>1</i><i class=a3>3</i><i class=a9>9</i><i class=a4>4</i><i class=a1>1</i><i class=a3>3</i><i class=a0>0</i><i class=a8>8</i><i class=a6>6</i><i class=a8>8</i><i class=a7>7</i><i class=a0>0</i><i class=a0>0</i><i class=a1>1</i><i class=a1>1</i><i class=a0>0</i><i class=a2>2</i><i class=a0>0</i><i class=a2>2</i><i class=a7>7</i><i class=a0>0</i><i class=a19>19</i><i class=a0>0</i><i class=a4>4</i><i class=a3>3</i><i class=a6>6</i><i class=a7>7</i><i class=a7>7</i><i class=a2>2</i><i class=a10>10</i><i class=a9>9</i><i class=a4>4</i><i class=a7>7</i></div>
<div class="r"><i class=a1>1</i><i class=a1>1</i><i class=a0>0</i><i class=a1>1</i><i class=a1>1</i><i class=a0>0</i><i class=a1>1</i><i class=a1>1</i><i class=a3>3</i><i class=a1>1</i><i class=a0>0</i><i class=a1>1</i><i class=a1>1</i><i class=a1>1</i><i class=a0>0</i><i class=a0>0</i><i class=a0>0</i><i class=a1>1</i><i class=a1>1</i><i class=a0>0</i><i class=a0>0</i><i class=a0>0</i><i class=a2>2</i><i class=a0>0</i><i class=a0>0</i><i class=a0>0</i><i class=a0>0</i><i class=a0>0</i><i class=a0>0</i><i class=a0>0</i><i class=a6>6</i><i class=a0>0</i><i class=a1>1</i><i class=a1>1</i><i class=a1>1</i><i class=a1>1</i><i class=a1>1</i><i class=a1>1</i><i class=a1>1</i><i class=a1>1</i><i class=a1>1</i></div>
<div class="r"><i class=a10>10</i><i class=a9>9</i><i class=a4>4</i><i class=a6>6</i><i class=a6>6</i><i class=a0>0</i><i class=a7>7</i><i class=a8>8</i><i class=a0>0</i><i class=a3>3</i><i class=a9>9</i><i class=a3>3</i><i class=a2>2</i><i class=a5>5</i><i class=a0>0</i><i class=a3>3</i><i class=a5>5</i><i class=a9>9</i><i class=a6>6</i><i class=a1>1</i><i class=a0>0</i><i class=a1>1</i><i class=a0>0</i><i class=a2>2</i><i class=a1>1</i><i class=a1>1</i><i class=a2>2</i><i class=a5>5</i><i class=a0>0</i><i class=a4>4</i><i class=a0>0</i><i class=a18>18</i><i class=a5>5</i><i class=a10>10</i><i class=a5>5</i><i class=a7>7</i><i class=a1>1</i><i class=a6>6</i><i class=a8>8</i><i class=a2>2</i><i class=a3>3</i></div>
<div class="r"><i class=a12>12</i><i class=a15>15</i><i class=a3>3</i><i class=a7>7</i><i class=a8>8</i><i class=a1>1</i><i class=a13>13</i><i class=a15>15</i><i class=a2>2</i><i class=a12>12</i><i class=a10>10</i><i class=a11>11</i><i class=a10>10</i><i class=a8>8</i><i class=a2>2</i><i class=a4>4</i><i class=a9>9</i><i class=a16>16</i><i class=a10>10</i><i class=a4>4</i><i class=a3>3</i><i class=a4>4</i><i class=a5>5</i><i class=a3>3</i><i class=a6>6</i><i class=a2>2</i><i class=a5>5</i><i class=a9>9</i><i class=a4>4</i><i class=a3>3</i><i class=a1>1</i><i class=a5>5</i><i class=a40>40</i><i class=a23>23</i><i class=a11>11</i><i class=a10>10</i><i class=a4>4</i><i class=a13>13</i><i class=a10>10</i><i class=a5>5</i><i class=a7>7</i></div>
<div class="r"><i class=a14>14</i><i class=a19>19</i><i class=a5>5</i><i class=a8>8</i><i class=a11>11</i><i class=a1>1</i><i class=a18>18</i><i class=a17>17</i><i class=a2>2</i><i class=a10>10</i><i class=a13>13</i><i class=a11>11</i><i class=a9>9</i><i class=a6>6</i><i class=a1>1</i><i class=a3>3</i><i class=a7>7</i><i class=a21>21</i><i class=a13>13</i><i class=a5>5</i><i class=a2>2</i><i class=a4>4</i><i class=a7>7</i><i class=a5>5</i><i class=a2>2</i><i class=a3>3</i><i class=a8>8</i><i class=a13>13</i><i class=a4>4</i><i class=a6>6</i><i class=a1>1</i><i class=a10>10</i><i class=a23>23</i><i class=a38>38</i><i class=a12>12</i><i class=a14>14</i><i class=a2>2</i><i class=a15>15</i><i class=a14>14</i><i class=a8>8</i><i class=a6>6</i></div>
<div class="r"><i class=a17>17</i><i class=a19>19</i><i class=a5>5</i><i class=a10>10</i><i class=a8>8</i><i class=a1>1</i><i class=a14>14</i><i class=a14>14</i><i class=a1>1</i><i class=a6>6</i><i class=a10>10</i><i class=a7>7</i><i class=a6>6</i><i class=a8>8</i><i class=a0>0</i><i class=a5>5</i><i class=a7>7</i><i class=a12>12</i><i class=a11>11</i><i class=a0>0</i><i class=a1>1</i><i class=a3>3</i><i class=a5>5</i><i class=a0>0</i><i class=a2>2</i><i class=a1>1</i><i class=a3>3</i><i class=a5>5</i><i class=a2>2</i><i class=a7>7</i><i class=a1>1</i><i class=a5>5</i><i class=a11>11</i><i class=a12>12</i><i class=a21>21</i><i class=a18>18</i><i class=a4>4</i><i class=a20>20</i><i class=a9>9</i><i class=a9>9</i><i class=a8>8</i></div>
<div class="r"><i class=a20>20</i><i class=a22>22</i><i class=a4>4</i><i class=a12>12</i><i class=a11>11</i><i class=a1>1</i><i class=a17>17</i><i class=a17>17</i><i class=a2>2</i><i class=a7>7</i><i class=a14>14</i><i class=a8>8</i><i class=a6>6</i><i class=a7>7</i><i class=a1>1</i><i class=a6>6</i><i class=a11>11</i><i class=a16>16</i><i class=a14>14</i><i class=a0>0</i><i class=a1>1</i><i class=a4>4</i><i class=a6>6</i><i class=a1>1</i><i class=a1>1</i><i class=a2>2</i><i class=a4>4</i><i class=a4>4</i><i class=a3>3</i><i class=a7>7</i><i class=a1>1</i><i class=a7>7</i><i class=a10>10</i><i class=a14>14</i><i class=a18>18</i><i class=a24>24</i><i class=a4>4</i><i class=a23>23</i><i class=a10>10</i><i class=a9>9</i><i class=a9>9</i></div>
<div class="r"><i class=a4>4</i><i class=a5>5</i><i class=a3>3</i><i class=a4>4</i><i class=a2>2</i><i class=a0>0</i><i class=a4>4</i><i class=a7>7</i><i class=a2>2</i><i class=a5>5</i><i class=a5>5</i><i class=a5>5</i><i class=a4>4</i><i class=a3>3</i><i class=a1>1</i><i class=a1>1</i><i class=a4>4</i><i class=a5>5</i><i class=a3>3</i><i class=a0>0</i><i class=a1>1</i><i class=a1>1</i><i class=a2>2</i><i class=a0>0</i><i class=a2>2</i><i class=a2>2</i><i class=a1>1</i><i class=a3>3</i><i class=a1>1</i><i class=a2>2</i><i class=a1>1</i><i class=a1>1</i><i class=a4>4</i><i class=a2>2</i><i class=a4>4</i><i class=a4>4</i><i class=a9>9</i><i class=a6>6</i><i class=a3>3</i><i class=a2>2</i><i class=a3>3</i></div>
<div class="r"><i class=a22>22</i><i class=a25>25</i><i class=a5>5</i><i class=a16>16</i><i class=a10>10</i><i class=a1>1</i><i class=a17>17</i><i class=a18>18</i><i class=a3>3</i><i class=a9>9</i><i class=a15>15</i><i class=a11>11</i><i class=a9>9</i><i class=a9>9</i><i class=a1>1</i><i class=a6>6</i><i class=a12>12</i><i class=a18>18</i><i class=a15>15</i><i class=a0>0</i><i class=a1>1</i><i class=a4>4</i><i class=a6>6</i><i class=a1>1</i><i class=a2>2</i><i class=a2>2</i><i class=a4>4</i><i class=a7>7</i><i class=a5>5</i><i class=a10>10</i><i class=a1>1</i><i class=a6>6</i><i class=a13>13</i><i class=a15>15</i><i class=a20>20</i><i class=a23>23</i><i class=a6>6</i><i class=a30>30</i><i class=a13>13</i><i class=a10>10</i><i class=a9>9</i></div>
<div class="r"><i class=a14>14</i><i class=a15>15</i><i class=a3>3</i><i class=a12>12</i><i class=a10>10</i><i class=a0>0</i><i class=a12>12</i><i class=a12>12</i><i class=a1>1</i><i class=a8>8</i><i class=a8>8</i><i class=a7>7</i><i class=a5>5</i><i class=a6>6</i><i class=a0>0</i><i class=a3>3</i><i class=a8>8</i><i class=a11>11</i><i class=a11>11</i><i class=a1>1</i><i class=a1>1</i><i class=a3>3</i><i class=a4>4</i><i class=a1>1</i><i class=a1>1</i><i class=a1>1</i><i class=a3>3</i><i class=a11>11</i><i class=a1>1</i><i class=a9>9</i><i class=a1>1</i><i class=a8>8</i><i class=a10>10</i><i class=a14>14</i><i class=a9>9</i><i class=a10>10</i><i class=a3>3</i><i class=a13>13</i><i class=a22>22</i><i class=a7>7</i><i class=a6>6</i></div>
<div class="r"><i class=a11>11</i><i class=a13>13</i><i class=a7>7</i><i class=a17>17</i><i class=a6>6</i><i class=a2>2</i><i class=a12>12</i><i class=a8>8</i><i class=a1>1</i><i class=a4>4</i><i class=a4>4</i><i class=a5>5</i><i class=a3>3</i><i class=a2>2</i><i class=a0>0</i><i class=a6>6</i><i class=a6>6</i><i class=a7>7</i><i class=a8>8</i><i class=a0>0</i><i class=a1>1</i><i class=a2>2</i><i class=a5>5</i><i class=a0>0</i><i class=a0>0</i><i class=a1>1</i><i class=a2>2</i><i class=a5>5</i><i class=a2>2</i><i class=a4>4</i><i class=a1>1</i><i class=a2>2</i><i class=a5>5</i><i class=a8>8</i><i class=a9>9</i><i class=a9>9</i><i class=a2>2</i><i class=a10>10</i><i class=a7>7</i><i class=a36>36</i><i class=a6>6</i></div>
<div class="r"><i class=a12>12</i><i class=a13>13</i><i class=a2>2</i><i class=a11>11</i><i class=a6>6</i><i class=a0>0</i><i class=a7>7</i><i class=a11>11</i><i class=a2>2</i><i class=a4>4</i><i class=a6>6</i><i class=a4>4</i><i class=a2>2</i><i class=a3>3</i><i class=a0>0</i><i class=a20>20</i><i class=a7>7</i><i class=a9>9</i><i class=a7>7</i><i class=a0>0</i><i class=a1>1</i><i class=a1>1</i><i class=a2>2</i><i class=a0>0</i><i class=a1>1</i><i class=a0>0</i><i class=a1>1</i><i class=a3>3</i><i class=a1>1</i><i class=a7>7</i><i class=a1>1</i><i class=a3>3</i><i class=a7>7</i><i class=a6>6</i><i class=a8>8</i><i class=a9>9</i><i class=a3>3</i><i class=a9>9</i><i class=a6>6</i><i class=a6>6</i><i class=a26>26</i></div>
</div>
<div class="p" style="left:1687px;top:81px;width:14px;height:38px;background:#fbfbfb"></div>
<div class="p" style="left:1687px;top:119px;width:2px;height:780px;background:#f4f4f4"></div>
<div class="p" style="left:1689px;top:119px;width:12px;height:780px;background:#f0f0f0"></div>
<div class="p" style="left:1689px;top:136px;width:12px;height:716px;background:#c8c8c8"></div>
<svg class="p" style="left:1689px;top:119px" width="12" height="780" viewBox="0 0 12 780"><path d="M5 11l3.500-3.500L12 11M5 773l3.500 3.500L12 773" fill="none" stroke="#aaa" stroke-width="1.2"/></svg>
<div class="p" style="left:293px;top:899px;width:1408px;height:2px;background:#f6f6f6"></div>
<div class="p" style="left:209px;top:901px;width:1492px;height:17px;background:#f0f0f0"></div>
<div class="p" style="left:226px;top:901px;width:1366px;height:17px;background:#c8c8c8"></div>
<svg class="p" style="left:209px;top:901px" width="1492" height="17" viewBox="0 0 1492 17"><path d="M9 4.500L5.500 8.500 9 12.500M1467 4.500l3.500 4-3.500 4" fill="none" stroke="#aaa" stroke-width="1.3"/></svg>
<div class="p" id="st"></div>
<svg class="p" style="left:1625px;top:921px" width="76" height="15" viewBox="0 0 76 15"><path d="M1 7l7-6 7 6" fill="none" stroke="#3a9ad0" stroke-width="2"/><rect x="3.500" y="7" width="9" height="6.500" fill="#e8f2fa" stroke="#8fb8d8"/><rect x="6.500" y="9" width="3" height="4.500" fill="#a87838"/><rect x="27.500" y="2.500" width="13" height="12" fill="#fff" stroke="#555"/><path d="M47 5h8l-4 6z" fill="#111"/><path d="M72 13h1M69 13h1M72 10h1" stroke="#aab" stroke-width="1"/></svg>
</body></html>
